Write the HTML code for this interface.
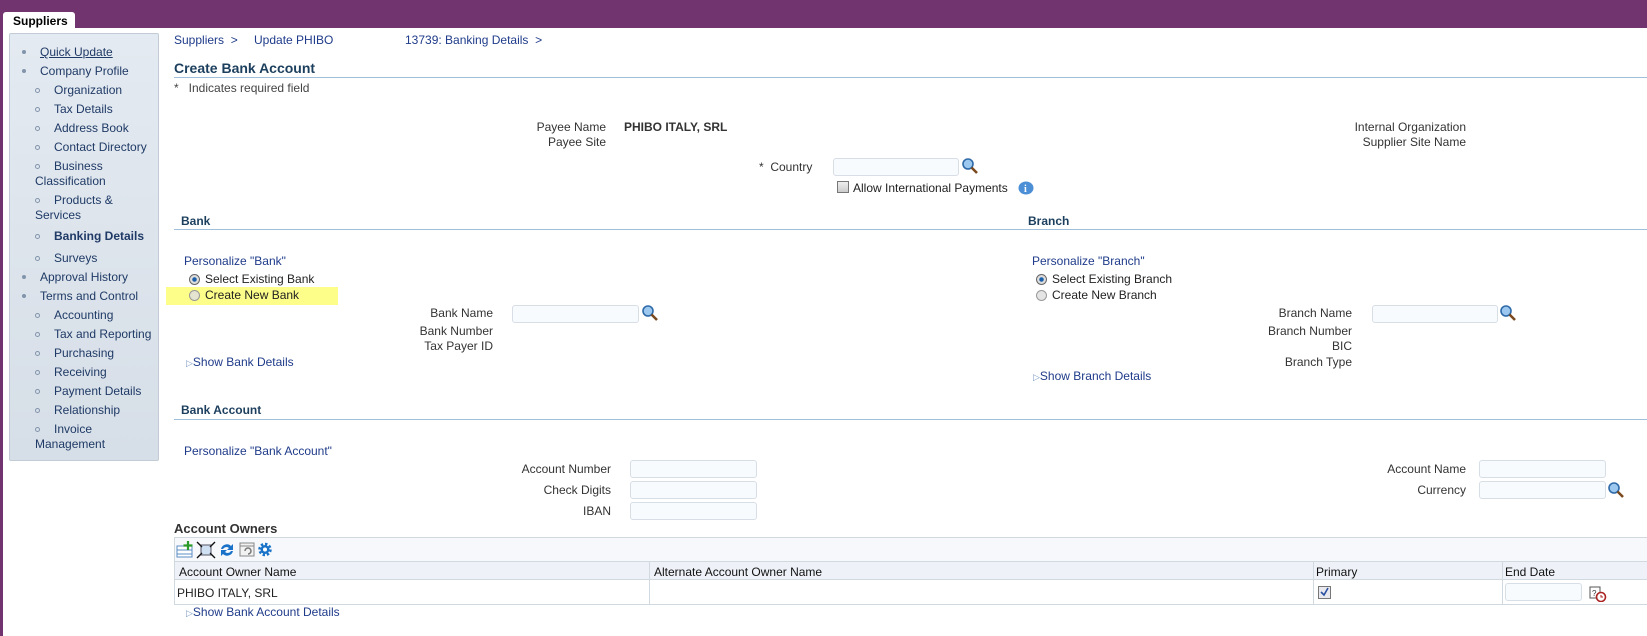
<!DOCTYPE html>
<html><head><meta charset="utf-8"><style>
*{margin:0;padding:0;box-sizing:border-box}
body{width:1647px;height:636px;overflow:hidden;background:#fff;font-family:"Liberation Sans",Arial,sans-serif;font-size:12px;color:#333;position:relative}
.a{position:absolute;white-space:nowrap;line-height:14px}
.r{text-align:right}
.lnk{color:#1f3b8a}
.h{font-weight:bold;color:#1c3f5e;font-size:13px}
.line{position:absolute;height:1px;background:#9fbfda}
.inp{position:absolute;height:18px;border:1px solid #d7dee6;border-radius:3px;background:#f8fbfe}
.nav{color:#1f3a66}
.b1{position:absolute;width:4px;height:4px;border-radius:50%;background:#8294ab}
.b2{position:absolute;width:5px;height:5px;border-radius:50%;border:1px solid #8294ab}
</style></head><body>
<div style="position:absolute;left:0;top:0;width:1647px;height:28px;background:#72346f"></div>
<div style="position:absolute;left:0;top:28px;width:3px;height:608px;background:#72346f"></div>
<div class="a" style="left:3px;top:12px;width:72px;height:17px;background:#fff;border-radius:3px 3px 0 0;font-weight:bold;color:#000;font-size:12px;padding:2px 0 0 10px">Suppliers</div>

<div style="position:absolute;left:9px;top:33px;width:150px;height:428px;background:linear-gradient(#e4eaf1,#d6dee7);border:1px solid #c3ccd6;border-radius:2px"></div>
<div class="nav">
<div class="b1" style="left:22px;top:50px"></div><div class="a" style="left:40px;top:45px;text-decoration:underline">Quick Update</div>
<div class="b1" style="left:22px;top:69px"></div><div class="a" style="left:40px;top:64px">Company Profile</div>
<div class="b2" style="left:35px;top:88px"></div><div class="a" style="left:54px;top:83px">Organization</div>
<div class="b2" style="left:35px;top:107px"></div><div class="a" style="left:54px;top:102px">Tax Details</div>
<div class="b2" style="left:35px;top:126px"></div><div class="a" style="left:54px;top:121px">Address Book</div>
<div class="b2" style="left:35px;top:145px"></div><div class="a" style="left:54px;top:140px">Contact Directory</div>
<div class="b2" style="left:35px;top:164px"></div><div class="a" style="left:54px;top:159px">Business</div>
<div class="a" style="left:35px;top:174px">Classification</div>
<div class="b2" style="left:35px;top:198px"></div><div class="a" style="left:54px;top:193px">Products &amp;</div>
<div class="a" style="left:35px;top:208px">Services</div>
<div class="b2" style="left:35px;top:234px"></div><div class="a" style="left:54px;top:229px;font-weight:bold">Banking Details</div>
<div class="b2" style="left:35px;top:256px"></div><div class="a" style="left:54px;top:251px">Surveys</div>
<div class="b1" style="left:22px;top:275px"></div><div class="a" style="left:40px;top:270px">Approval History</div>
<div class="b1" style="left:22px;top:294px"></div><div class="a" style="left:40px;top:289px">Terms and Control</div>
<div class="b2" style="left:35px;top:313px"></div><div class="a" style="left:54px;top:308px">Accounting</div>
<div class="b2" style="left:35px;top:332px"></div><div class="a" style="left:54px;top:327px">Tax and Reporting</div>
<div class="b2" style="left:35px;top:351px"></div><div class="a" style="left:54px;top:346px">Purchasing</div>
<div class="b2" style="left:35px;top:370px"></div><div class="a" style="left:54px;top:365px">Receiving</div>
<div class="b2" style="left:35px;top:389px"></div><div class="a" style="left:54px;top:384px">Payment Details</div>
<div class="b2" style="left:35px;top:408px"></div><div class="a" style="left:54px;top:403px">Relationship</div>
<div class="b2" style="left:35px;top:427px"></div><div class="a" style="left:54px;top:422px">Invoice</div>
<div class="a" style="left:35px;top:437px">Management</div>
</div>

<div class="a lnk" style="left:174px;top:33px">Suppliers &nbsp;&gt;</div>
<div class="a lnk" style="left:254px;top:33px">Update PHIBO</div>
<div class="a lnk" style="left:405px;top:33px">13739: Banking Details &nbsp;&gt;</div>
<div class="a h" style="left:174px;top:61px;font-size:14px">Create Bank Account</div>
<div class="line" style="left:174px;top:77px;width:1473px"></div>
<div class="a" style="left:174px;top:81px;color:#444">* &nbsp;&nbsp;Indicates required field</div>

<div class="a r" style="left:456px;width:150px;top:120px">Payee Name</div>
<div class="a r" style="left:456px;width:150px;top:135px">Payee Site</div>
<div class="a" style="left:624px;top:120px;font-weight:bold">PHIBO ITALY, SRL</div>
<div class="a r" style="left:1266px;width:200px;top:120px">Internal Organization</div>
<div class="a r" style="left:1266px;width:200px;top:135px">Supplier Site Name</div>

<div class="a" style="left:759px;top:160px">*&nbsp; Country</div>
<div class="inp" style="left:833px;top:158px;width:126px"></div>
<svg style="position:absolute;left:961px;top:157px" width="18" height="18"><circle cx="7" cy="7" r="5" fill="#9cc8ef" stroke="#2e6aa8" stroke-width="1.6"/><line x1="10.5" y1="10.5" x2="16" y2="16" stroke="#7a4a20" stroke-width="2.6"/></svg>
<div style="position:absolute;left:837px;top:181px;width:12px;height:12px;border:1px solid #777;background:linear-gradient(#eee,#ccc)"></div>
<div class="a" style="left:853px;top:181px;color:#222">Allow International Payments</div>
<svg style="position:absolute;left:1018px;top:181px" width="16" height="14"><ellipse cx="8" cy="7" rx="7.5" ry="6.5" fill="#4d8fd6"/><text x="6" y="11" font-size="10" font-weight="bold" fill="#fff" font-family="Liberation Serif">i</text></svg>

<div class="a h" style="left:181px;top:214px;font-size:12px">Bank</div>
<div class="a h" style="left:1028px;top:214px;font-size:12px">Branch</div>
<div class="line" style="left:174px;top:229px;width:1473px"></div>

<div class="a lnk" style="left:184px;top:254px">Personalize "Bank"</div>
<div style="position:absolute;left:166px;top:287px;width:172px;height:18px;background:#fdfd8a"></div>
<div style="position:absolute;left:189px;top:274px;width:11px;height:11px;border-radius:50%;border:1px solid #666;background:radial-gradient(#1a5fa8 30%,#ddd 40%)"></div>
<div class="a" style="left:205px;top:272px;color:#222">Select Existing Bank</div>
<div style="position:absolute;left:189px;top:290px;width:11px;height:11px;border-radius:50%;border:1px solid #999;background:#e4e4d0"></div>
<div class="a" style="left:205px;top:288px;color:#222">Create New Bank</div>
<div class="a r" style="left:343px;width:150px;top:306px">Bank Name</div>
<div class="a r" style="left:343px;width:150px;top:324px">Bank Number</div>
<div class="a r" style="left:343px;width:150px;top:339px">Tax Payer ID</div>
<div class="inp" style="left:512px;top:305px;width:127px"></div>
<svg style="position:absolute;left:641px;top:304px" width="18" height="18"><circle cx="7" cy="7" r="5" fill="#9cc8ef" stroke="#2e6aa8" stroke-width="1.6"/><line x1="10.5" y1="10.5" x2="16" y2="16" stroke="#7a4a20" stroke-width="2.6"/></svg>
<div class="a lnk" style="left:186px;top:355px"><span style="color:#7c9ac4;font-size:9px">▷</span>Show Bank Details</div>

<div class="a lnk" style="left:1032px;top:254px">Personalize "Branch"</div>
<div style="position:absolute;left:1036px;top:274px;width:11px;height:11px;border-radius:50%;border:1px solid #666;background:radial-gradient(#1a5fa8 30%,#ddd 40%)"></div>
<div class="a" style="left:1052px;top:272px;color:#222">Select Existing Branch</div>
<div style="position:absolute;left:1036px;top:290px;width:11px;height:11px;border-radius:50%;border:1px solid #999;background:#e4e4e4"></div>
<div class="a" style="left:1052px;top:288px;color:#222">Create New Branch</div>
<div class="a r" style="left:1202px;width:150px;top:306px">Branch Name</div>
<div class="a r" style="left:1202px;width:150px;top:324px">Branch Number</div>
<div class="a r" style="left:1202px;width:150px;top:339px">BIC</div>
<div class="a r" style="left:1202px;width:150px;top:355px">Branch Type</div>
<div class="inp" style="left:1372px;top:305px;width:126px"></div>
<svg style="position:absolute;left:1499px;top:304px" width="18" height="18"><circle cx="7" cy="7" r="5" fill="#9cc8ef" stroke="#2e6aa8" stroke-width="1.6"/><line x1="10.5" y1="10.5" x2="16" y2="16" stroke="#7a4a20" stroke-width="2.6"/></svg>
<div class="a lnk" style="left:1033px;top:369px"><span style="color:#7c9ac4;font-size:9px">▷</span>Show Branch Details</div>

<div class="a h" style="left:181px;top:403px;font-size:12px">Bank Account</div>
<div class="line" style="left:174px;top:419px;width:1473px"></div>
<div class="a lnk" style="left:184px;top:444px">Personalize "Bank Account"</div>
<div class="a r" style="left:461px;width:150px;top:462px">Account Number</div>
<div class="a r" style="left:461px;width:150px;top:483px">Check Digits</div>
<div class="a r" style="left:461px;width:150px;top:504px">IBAN</div>
<div class="inp" style="left:630px;top:460px;width:127px"></div>
<div class="inp" style="left:630px;top:481px;width:127px"></div>
<div class="inp" style="left:630px;top:502px;width:127px"></div>
<div class="a r" style="left:1316px;width:150px;top:462px">Account Name</div>
<div class="a r" style="left:1316px;width:150px;top:483px">Currency</div>
<div class="inp" style="left:1479px;top:460px;width:127px"></div>
<div class="inp" style="left:1479px;top:481px;width:127px"></div>
<svg style="position:absolute;left:1607px;top:481px" width="18" height="18"><circle cx="7" cy="7" r="5" fill="#9cc8ef" stroke="#2e6aa8" stroke-width="1.6"/><line x1="10.5" y1="10.5" x2="16" y2="16" stroke="#7a4a20" stroke-width="2.6"/></svg>

<div class="a" style="left:174px;top:522px;font-weight:bold;color:#333;font-size:13px">Account Owners</div>
<div style="position:absolute;left:174px;top:537px;width:1473px;height:68px;border:1px solid #d0d8e0;border-right:none;background:#fff"></div>
<div style="position:absolute;left:175px;top:538px;width:1472px;height:24px;background:#f6f8fb;border-bottom:1px solid #d0d8e0"></div>
<svg style="position:absolute;left:176px;top:541px" width="110" height="18">
<rect x1="0" x="1" y="5" width="15" height="11" fill="#fff" stroke="#5b8dc6"/><line x1="1" y1="9" x2="16" y2="9" stroke="#5b8dc6"/><line x1="1" y1="13" x2="16" y2="13" stroke="#5b8dc6"/><path d="M12 0v9M7.5 4.5h9" stroke="#2a9a2a" stroke-width="2.2"/>
<rect x="25" y="4" width="10" height="10" fill="#cfe0f3" stroke="#556"/><path d="M21 1l5 5M39 1l-5 5M21 17l5-5M39 17l-5-5" stroke="#111" stroke-width="1.4"/>
<path d="M45 8a6 6 0 0 1 10-3l2-2v6h-6l2-2a4 4 0 0 0-6 1zM57 10a6 6 0 0 1-10 3l-2 2v-6h6l-2 2a4 4 0 0 0 6-1z" fill="#1a73c8"/>
<rect x="64" y="2" width="14" height="13" fill="#f2f2f2" stroke="#888"/><line x1="64" y1="5" x2="78" y2="5" stroke="#888"/><path d="M69 10a3 3 0 1 1 3 3" stroke="#777" stroke-width="1.5" fill="none"/>
<circle cx="89" cy="8.5" r="5" fill="none" stroke="#1a73c8" stroke-width="3.5" stroke-dasharray="2.2 1.7"/><circle cx="89" cy="8.5" r="4.5" fill="#1a73c8"/><circle cx="89" cy="8.5" r="2" fill="#fff"/>
</svg>
<div style="position:absolute;left:175px;top:562px;width:1472px;height:18px;background:#eef2f8;border-bottom:1px solid #d0d8e0"></div>
<div style="position:absolute;left:649px;top:562px;width:1px;height:43px;background:#d0d8e0"></div>
<div style="position:absolute;left:1313px;top:562px;width:1px;height:43px;background:#d0d8e0"></div>
<div style="position:absolute;left:1502px;top:562px;width:1px;height:43px;background:#d0d8e0"></div>
<div class="a" style="left:179px;top:565px;color:#111">Account Owner Name</div>
<div class="a" style="left:654px;top:565px;color:#111">Alternate Account Owner Name</div>
<div class="a" style="left:1316px;top:565px;color:#111">Primary</div>
<div class="a" style="left:1505px;top:565px;color:#111">End Date</div>
<div class="a" style="left:177px;top:586px;color:#222">PHIBO ITALY, SRL</div>
<svg style="position:absolute;left:1318px;top:586px" width="13" height="13"><rect x=".5" y=".5" width="12" height="12" fill="#e8e8ee" stroke="#777"/><path d="M3 6l3 3 4-7" stroke="#2950a0" stroke-width="1.6" fill="none"/></svg>
<div class="inp" style="left:1505px;top:583px;width:77px"></div>
<svg style="position:absolute;left:1589px;top:585px" width="18" height="17"><rect x="1" y="2" width="10" height="11" fill="#fff" stroke="#555"/><text x="3" y="11" font-size="8" fill="#333">?</text><circle cx="12" cy="12" r="4.5" fill="#fff" stroke="#a22" stroke-width="1.6"/><path d="M12 10v2h2" stroke="#a22" fill="none"/></svg>
<div class="a lnk" style="left:186px;top:605px"><span style="color:#7c9ac4;font-size:9px">▷</span>Show Bank Account Details</div>
</body></html>
